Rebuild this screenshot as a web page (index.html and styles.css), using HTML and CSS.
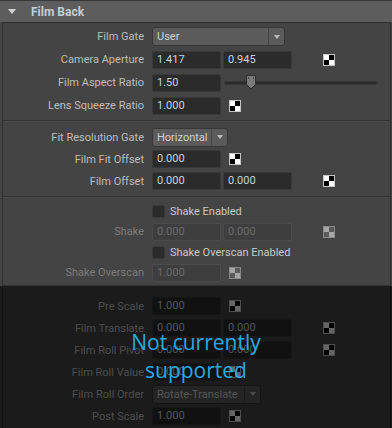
FILE: index.html
```html
<!DOCTYPE html>
<html lang="en">

<head>
    <meta charset="UTF-8">
    <meta name="viewport" content="width=device-width, initial-scale=1.0">
    <title>Film Back</title>
    <link rel="stylesheet" href="styles.css">
</head>

<body>
    <div class="editor">
        <div class="header"><span class="arrow"></span>Film Back</div>

        <div class="panel">
            <div class="section first">
                <div class="row">
                    <label>Film Gate</label>
                    <div class="ctl">
                        <div class="combo gate"><span class="value">User</span><span class="drop"></span></div>
                    </div>
                </div>
                <div class="row">
                    <label>Camera Aperture</label>
                    <div class="ctl">
                        <div class="field">1.417</div>
                        <div class="field">0.945</div>
                        <span class="map far"></span>
                    </div>
                </div>
                <div class="row">
                    <label>Film Aspect Ratio</label>
                    <div class="ctl">
                        <div class="field">1.50</div>
                        <div class="slider">
                            <svg class="thumb" width="12" height="15" viewBox="0 0 12 15">
                                <path d="M1.5 0.5 H10.5 V9.5 L6 14 L1.5 9.5 Z" fill="#7a7a7a" stroke="#2e2e2e" />
                                <rect x="3" y="2" width="1" height="2" fill="#444" />
                                <rect x="8" y="2" width="1" height="2" fill="#444" />
                            </svg>
                        </div>
                    </div>
                </div>
                <div class="row">
                    <label>Lens Squeeze Ratio</label>
                    <div class="ctl">
                        <div class="field">1.000</div>
                        <span class="map"></span>
                    </div>
                </div>
            </div>

            <div class="section second">
                <div class="row tight">
                    <label>Fit Resolution Gate</label>
                    <div class="ctl">
                        <div class="combo fit"><span class="value">Horizontal</span><span class="drop"></span></div>
                    </div>
                </div>
                <div class="row tight">
                    <label>Film Fit Offset</label>
                    <div class="ctl">
                        <div class="field">0.000</div>
                        <span class="map"></span>
                    </div>
                </div>
                <div class="row tight">
                    <label>Film Offset</label>
                    <div class="ctl">
                        <div class="field">0.000</div>
                        <div class="field">0.000</div>
                        <span class="map far"></span>
                    </div>
                </div>
            </div>

            <div class="section third">
                <div class="row check">
                    <label></label>
                    <div class="ctl"><span class="box"></span><span class="box-text">Shake Enabled</span></div>
                </div>
                <div class="row off">
                    <label>Shake</label>
                    <div class="ctl">
                        <div class="field">0.000</div>
                        <div class="field">0.000</div>
                        <span class="map far"></span>
                    </div>
                </div>
                <div class="row check">
                    <label></label>
                    <div class="ctl"><span class="box"></span><span class="box-text">Shake Overscan Enabled</span></div>
                </div>
                <div class="row off">
                    <label>Shake Overscan</label>
                    <div class="ctl">
                        <div class="field">1.000</div>
                        <span class="map"></span>
                    </div>
                </div>
            </div>

            <div class="section locked">
                <div class="row tight">
                    <label>Pre Scale</label>
                    <div class="ctl">
                        <div class="field">1.000</div>
                        <span class="map"></span>
                    </div>
                </div>
                <div class="row tight">
                    <label>Film Translate</label>
                    <div class="ctl">
                        <div class="field">0.000</div>
                        <div class="field">0.000</div>
                        <span class="map far"></span>
                    </div>
                </div>
                <div class="row tight">
                    <label>Film Roll Pivot</label>
                    <div class="ctl">
                        <div class="field">0.000</div>
                        <div class="field">0.000</div>
                        <span class="map far"></span>
                    </div>
                </div>
                <div class="row tight">
                    <label>Film Roll Value</label>
                    <div class="ctl">
                        <div class="field">0.000</div>
                        <span class="map"></span>
                    </div>
                </div>
                <div class="row tight">
                    <label>Film Roll Order</label>
                    <div class="ctl">
                        <div class="combo order"><span class="value">Rotate-Translate</span><span class="drop"></span></div>
                    </div>
                </div>
                <div class="row tight">
                    <label>Post Scale</label>
                    <div class="ctl">
                        <div class="field">1.000</div>
                        <span class="map"></span>
                    </div>
                </div>

                <div class="overlay">
                    <p>Not currently<br>supported</p>
                </div>
            </div>
        </div>
    </div>
</body>

</html>
```

FILE: styles.css
```css
body {
    margin: 0;
    background: #444444;
    font-family: Roboto, "Liberation Sans", sans-serif;
    font-size: 11px;
    color: #bdbdbd;
}

.editor {
    width: 392px;
    height: 428px;
    overflow: hidden;
}

.header {
    height: 21px;
    border-top: 1px solid #383838;
    background: #5d5d5d;
    display: flex;
    align-items: center;
    font-size: 12px;
    font-weight: bold;
    color: #c6ccd3;
}

.header .arrow {
    width: 0;
    height: 0;
    border-left: 4.5px solid transparent;
    border-right: 4.5px solid transparent;
    border-top: 5px solid #d2d2d2;
    margin: 0 15px 0 8px;
}

.panel {
    margin: 0 1px 0 2px;
    border: 1px solid #2f2f2f;
    border-bottom: none;
}

.section {
    position: relative;
}

.section + .section {
    border-top: 1px solid #333333;
    box-shadow: inset 0 1px 0 #4b4b4b;
}

.first {
    padding: 2px 0 3px;
}

.second {
    padding: 5px 0 4px;
}

.third {
    padding: 5px 0 1px;
}

.locked {
    padding: 9px 0 4px;
}

.row {
    display: grid;
    grid-template-columns: 141px 1fr;
    column-gap: 8px;
    align-items: center;
    height: 23px;
}

.row.tight {
    height: 22px;
}

.row.check {
    height: 18px;
}

.row label {
    text-align: right;
    white-space: nowrap;
}

.ctl {
    display: flex;
    align-items: center;
    gap: 2px;
}

.field {
    box-sizing: border-box;
    width: 69px;
    height: 18px;
    padding-left: 4px;
    line-height: 16px;
    background: #2b2b2b;
    border: 1px solid #393939;
    border-radius: 2px;
    color: #c6d2dd;
}

.map {
    box-sizing: border-box;
    width: 12px;
    height: 12px;
    margin-left: 6px;
    border: 1px solid #c4c4c4;
    background: conic-gradient(#000 0 25%, #fff 0 50%, #000 0 75%, #fff 0);
}

.map.far {
    margin-left: 29px;
}

.slider {
    position: relative;
    box-sizing: border-box;
    width: 153px;
    height: 4px;
    margin-left: 1px;
    background: #2b2b2b;
    border: 1px solid #363636;
    border-radius: 2px;
}

.thumb {
    position: absolute;
    left: 20px;
    top: -7px;
}

.combo {
    box-sizing: border-box;
    display: flex;
    height: 19px;
    background: #5b5b5b;
    border: 1px solid #363636;
    border-radius: 3px;
    color: #d0d0d0;
}

.combo .value {
    flex: 1;
    padding-left: 4px;
    line-height: 17px;
    white-space: nowrap;
}

.combo .drop {
    width: 15px;
    border-left: 1px solid #474747;
    display: flex;
    align-items: center;
    justify-content: center;
}

.combo .drop::after {
    content: "";
    border-left: 3.5px solid transparent;
    border-right: 3.5px solid transparent;
    border-top: 4px solid #bcbcbc;
}

.combo.gate {
    width: 133px;
}

.combo.fit {
    width: 76px;
}

.combo.order {
    width: 109px;
}

.box {
    box-sizing: border-box;
    width: 13px;
    height: 13px;
    background: #2b2b2b;
    border: 1px solid #383838;
    border-radius: 2px;
}

.box-text {
    margin-left: 3px;
    color: #c8c8c8;
}

.off label {
    color: #7c7c7c;
}

.off .field {
    background: #3e3e3e;
    border-color: #4b4b4b;
    color: #6a6a6a;
}

.off .map {
    border-color: #8a8a8a;
    background: conic-gradient(#5a5a5a 0 25%, #a6a6a6 0 50%, #5a5a5a 0 75%, #a6a6a6 0);
}

.overlay {
    position: absolute;
    top: 0;
    left: -3px;
    width: 392px;
    height: 142px;
    background: rgba(0, 0, 0, 0.6);
    display: flex;
    align-items: center;
    justify-content: center;
}

.overlay p {
    margin: 0 0 3px;
    text-align: center;
    font-family: "Open Sans", sans-serif;
    font-size: 21px;
    line-height: 28px;
    color: #2aa8e0;
}
```
